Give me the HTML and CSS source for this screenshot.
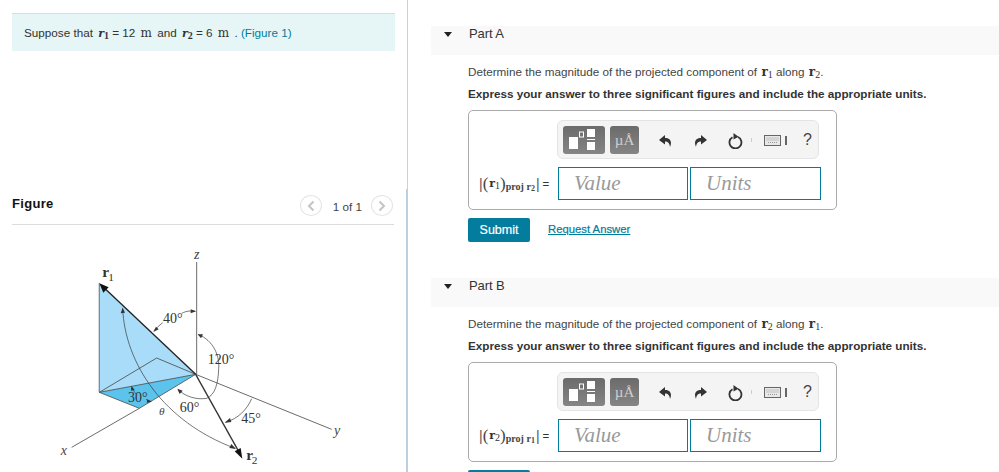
FILE: index.html
```html
<!DOCTYPE html>
<html lang="en">
<head>
<meta charset="utf-8">
<title>Projected component</title>
<link rel="stylesheet" href="styles.css">
</head>
<body>
<main class="page">
  <aside class="left">
    <section class="left-top">
      <div class="intro">Suppose that <span class="mi">r</span><span class="msub">1</span> = 12 <span class="unit">m</span> and <span class="mi">r</span><span class="msub">2</span> = 6 <span class="unit">m</span> . <a class="link">(Figure 1)</a></div>
    </section>
    <section class="left-bottom">
      <header class="fig-head">
        <h2 class="fig-title">Figure</h2>
        <nav class="pager">
          <span class="circle"><svg width="8" height="12" viewBox="0 0 8 12"><path d="M6.5 1.5 L2 6 L6.5 10.500" class="chev"/></svg></span>
          <span class="count">1 of 1</span>
          <span class="circle"><svg width="8" height="12" viewBox="0 0 8 12"><path d="M1.500 1.500 L6 6 L1.500 10.500" class="chev"/></svg></span>
        </nav>
      </header>
      <svg class="figure" width="320" height="232" viewBox="0 0 960 696">
        <polygon points="148,130 437,403 148,457" fill="#a8dcf8"/>
        <polygon points="148,457 437,403 268,505" fill="#5cc4ec"/>
        <g fill="none" stroke="#4d4d4d" stroke-width="2.500">
          <path d="M440 66 V403"/>
          <path d="M65 622 L268 505"/>
          <path d="M437 403 L845 568"/>
          <path d="M148 130 V457" stroke="#7d8b92" stroke-width="4"/>
          <path d="M148 457 L320 354 L437 403"/>
          <path d="M148 457 L437 403"/>
          <path d="M148 457 L268 505 L437 403"/>
        </g>
        <g fill="none" stroke="#333" stroke-width="2">
          <path d="M218 205 C225 370 340 545 555 625"/>
          <path d="M312 272 Q325 258 338 248"/>
          <path d="M395 220 C410 212 425 212 436 214"/>
          <path d="M445 284 C490 300 510 350 506 385 C505 430 495 465 470 475 C440 480 405 470 384 448"/>
          <path d="M605 476 C590 510 565 535 527 547"/>
          <path d="M246 441 C250 452 255 458 258 462"/>
          <path d="M288 478 C295 482 300 484 304 484"/>
        </g>
        <g fill="#333">
          <polygon points="218,203 212,220 225,218"/>
          <polygon points="558,627 538,624 544,612"/>
          <polygon points="310,276 318,260 326,268"/>
          <polygon points="438,214 422,208 422,220"/>
          <polygon points="443,283 459,283 453,295"/>
          <polygon points="382,446 398,452 389,462"/>
          <polygon points="524,548 540,534 544,546"/>
          <polygon points="244,438 254,450 243,452"/>
          <polygon points="305,485 292,478 290,488"/>
        </g>
        <path d="M437 403 L163 144" stroke="#222" stroke-width="4" fill="none"/>
        <polygon points="148,130 176,142 160,158" fill="#111"/>
        <path d="M437 403 L568 638" stroke="#333" stroke-width="4" fill="none"/>
        <polygon points="577,656 554,634 572,624" fill="#111"/>
        <g class="fig-num">
          <text x="339" y="249">40°</text>
          <text x="473" y="371">120°</text>
          <text x="234" y="486">30°</text>
          <text x="389" y="517">60°</text>
          <text x="574" y="548">45°</text>
        </g>
        <g class="fig-var">
          <text x="432" y="58">z</text>
          <text x="32" y="646">x</text>
          <text x="852" y="586">y</text>
          <text x="327" y="525" class="fig-small">θ</text>
        </g>
        <g class="fig-vec">
          <text x="157" y="112">r</text>
          <text x="175" y="124" class="fig-vecsub">1</text>
          <text x="589" y="660">r</text>
          <text x="605" y="672" class="fig-vecsub">2</text>
        </g>
      </svg>
    </section>
  </aside>

  <div class="right">
    <section class="part">
      <header class="part-head"><span class="caret"></span><h3 class="part-title">Part A</h3></header>
      <div class="part-body">
        <p class="q">Determine the magnitude of the projected component of <span class="bm">r</span><span class="bmsub">1</span> along <span class="bm">r</span><span class="bmsub">2</span>.</p>
        <p class="q strong">Express your answer to three significant figures and include the appropriate units.</p>
        <div class="answer">
          <div class="toolbar">
            <span class="tbtn tbtn-wide">
              <svg width="42" height="28" viewBox="0 0 42 28"><g fill="#fff"><rect x="6" y="11" width="9" height="12"/><rect x="24" y="3" width="8" height="8"/><rect x="24" y="13" width="8" height="1"/><rect x="24" y="16" width="8" height="8"/></g><rect x="16.500" y="6" width="4" height="5" fill="none" stroke="#fff"/></svg>
            </span>
            <span class="tbtn tbtn-unit">µÅ</span>
            <svg class="ic ic-undo" width="13" height="14" viewBox="0 0 13 14"><path d="M6 1 L0 6 L6 10.500 V7.500 C9 7.500 10.500 9 11 13 C13.500 7.500 11 4 6 4 Z" fill="#333"/></svg>
            <svg class="ic ic-redo" width="13" height="14" viewBox="0 0 13 14"><path d="M7 1 L13 6 L7 10.500 V7.500 C4 7.500 2.500 9 2 13 C-.5 7.500 2 4 7 4 Z" fill="#333"/></svg>
            <svg class="ic ic-reset" width="15" height="16" viewBox="0 0 15 16"><path d="M4.500 4.200 A6 6 0 1 0 10 4" fill="none" stroke="#333" stroke-width="1.800"/><path d="M5.500 0 L10.500 3.800 L5.500 6.500 Z" fill="#333"/></svg>
            <span class="tick"></span>
            <svg class="ic ic-kbd" width="24" height="11" viewBox="0 0 24 11"><rect x=".5" y=".5" width="16" height="10" fill="#e8e8e8" stroke="#666"/><path d="M2.500 3 H15 M2.500 5 H15 M4 7.500 H13" stroke="#999" stroke-dasharray="1 1"/><path d="M22 1 V10" stroke="#666" stroke-width="2"/></svg>
            <span class="help">?</span>
          </div>
          <div class="fields">
            <span class="label"><span class="bar">|</span><span class="paren">(</span><span class="bm">r</span><span class="bmsub">1</span><span class="paren">)</span><span class="proj">proj <b>r</b><span class="projsub">2</span></span><span class="bar">|</span><span class="eq">=</span></span>
            <span class="input input-value">Value</span>
            <span class="input input-units">Units</span>
          </div>
        </div>
        <div class="actions"><button class="submit">Submit</button><a class="request">Request Answer</a></div>
      </div>
    </section>
    <section class="part part-b">
      <header class="part-head"><span class="caret"></span><h3 class="part-title">Part B</h3></header>
      <div class="part-body">
        <p class="q">Determine the magnitude of the projected component of <span class="bm">r</span><span class="bmsub">2</span> along <span class="bm">r</span><span class="bmsub">1</span>.</p>
        <p class="q strong">Express your answer to three significant figures and include the appropriate units.</p>
        <div class="answer">
          <div class="toolbar">
            <span class="tbtn tbtn-wide">
              <svg width="42" height="28" viewBox="0 0 42 28"><g fill="#fff"><rect x="6" y="11" width="9" height="12"/><rect x="24" y="3" width="8" height="8"/><rect x="24" y="13" width="8" height="1"/><rect x="24" y="16" width="8" height="8"/></g><rect x="16.500" y="6" width="4" height="5" fill="none" stroke="#fff"/></svg>
            </span>
            <span class="tbtn tbtn-unit">µÅ</span>
            <svg class="ic ic-undo" width="13" height="14" viewBox="0 0 13 14"><path d="M6 1 L0 6 L6 10.500 V7.500 C9 7.500 10.500 9 11 13 C13.500 7.500 11 4 6 4 Z" fill="#333"/></svg>
            <svg class="ic ic-redo" width="13" height="14" viewBox="0 0 13 14"><path d="M7 1 L13 6 L7 10.500 V7.500 C4 7.500 2.500 9 2 13 C-.5 7.500 2 4 7 4 Z" fill="#333"/></svg>
            <svg class="ic ic-reset" width="15" height="16" viewBox="0 0 15 16"><path d="M4.500 4.200 A6 6 0 1 0 10 4" fill="none" stroke="#333" stroke-width="1.800"/><path d="M5.500 0 L10.500 3.800 L5.500 6.500 Z" fill="#333"/></svg>
            <span class="tick"></span>
            <svg class="ic ic-kbd" width="24" height="11" viewBox="0 0 24 11"><rect x=".5" y=".5" width="16" height="10" fill="#e8e8e8" stroke="#666"/><path d="M2.500 3 H15 M2.500 5 H15 M4 7.500 H13" stroke="#999" stroke-dasharray="1 1"/><path d="M22 1 V10" stroke="#666" stroke-width="2"/></svg>
            <span class="help">?</span>
          </div>
          <div class="fields">
            <span class="label"><span class="bar">|</span><span class="paren">(</span><span class="bm">r</span><span class="bmsub">2</span><span class="paren">)</span><span class="proj">proj <b>r</b><span class="projsub">1</span></span><span class="bar">|</span><span class="eq">=</span></span>
            <span class="input input-value">Value</span>
            <span class="input input-units">Units</span>
          </div>
        </div>
        <div class="actions"><button class="submit">Submit</button><a class="request">Request Answer</a></div>
      </div>
    </section>
  </div>
</main>
</body>
</html>
```

FILE: styles.css
```css
* { box-sizing: border-box; }
html, body { margin: 0; height: 472px; overflow: hidden; background: #fff; }
body { font-family: "Liberation Sans", Arial, sans-serif; font-size: 11.700px; color: #333; }
.page { display: flex; height: 472px; overflow: hidden; }

.left { width: 408px; flex: none; display: flex; flex-direction: column; }
.left-top { height: 189px; padding: 13px 12px 0; border-right: 1px solid #c3d3e0; }
.left-bottom { flex: 1; padding: 0 12px; border-right: 2px solid #bccfe0; }
.intro { height: 38px; border-top: 1px solid #dcdcdc; background: #e6f6f7; padding: 11px 12px 0; line-height: 16px; white-space: nowrap; }
.mi { font-family: "DejaVu Serif", serif; font-style: italic; font-weight: bold; font-size: 11px; margin-left: 2px; }
.msub { font-family: "Liberation Serif", serif; font-weight: bold; font-size: 10px; position: relative; top: 2px; }
.unit { font-family: "DejaVu Serif", serif; font-size: 12px; margin: 0 2px; }
.link { color: #007c9c; }

.fig-head { height: 36px; border-bottom: 1px solid #dcdcdc; display: flex; justify-content: space-between; align-items: center; padding-bottom: 6px; }
.fig-title { margin: 0; font-size: 13px; font-weight: bold; color: #111; letter-spacing: .3px; }
.pager { display: flex; align-items: center; margin-top: 4px; margin-right: 1px; }
.circle { width: 22px; height: 21px; border: 1px solid #e4e4e4; border-radius: 50%; display: flex; align-items: center; justify-content: center; }
.chev { fill: none; stroke: #c4c4c4; stroke-width: 2; }
.count { margin: 2px 9px 0 11px; color: #444; font-size: 11.700px; }

.figure { display: block; margin: 15px 0 0 38px; }
.fig-num text { font-family: "Liberation Serif", serif; font-size: 42px; fill: #333; }
.fig-var text { font-family: "Liberation Serif", serif; font-style: italic; font-size: 42px; fill: #444; }
.fig-var .fig-small { font-size: 34px; }
.fig-vec text { font-family: "Liberation Serif", serif; font-weight: bold; font-size: 46px; fill: #333; }
.fig-vec .fig-vecsub { font-weight: normal; font-size: 34px; }

.right { flex: 1; padding: 26px 0 0 23px; }
.part-b { margin-top: 36px; }
.part-head { height: 29px; background: #f9f9f9; display: flex; align-items: flex-start; padding: 0 0 0 13px; }
.caret { width: 0; height: 0; margin-top: 6px; border-left: 4px solid transparent; border-right: 4px solid transparent; border-top: 5px solid #222; }
.part-title { margin: 0 0 0 17px; font-size: 13px; letter-spacing: -.1px; line-height: 15px; font-weight: normal; color: #333; }
.part-body { padding: 0 0 0 37px; }
.q { margin: 9px 0 0; line-height: 15px; height: 15px; color: #444; white-space: nowrap; }
.q.strong { margin-top: 7px; font-weight: bold; color: #333; }
.bm { font-family: "DejaVu Serif", serif; font-weight: bold; font-size: 12px; margin-left: 1px; color: #333; }
.bmsub { font-family: "Liberation Serif", serif; font-size: 10px; position: relative; top: 2px; color: #333; }

.answer { margin-top: 9px; width: 369px; height: 100px; border: 1px solid #aaa; border-radius: 5px; padding: 9px 0 0 88px; }
.toolbar { width: 262px; height: 39px; background: #f4f4f4; border: 1px solid #e4e4e4; border-radius: 6px; display: flex; align-items: center; padding-left: 5px; }
.tbtn { height: 28px; border-radius: 3px; background: linear-gradient(#6b6b6b, #858585); display: flex; align-items: center; justify-content: center; flex: none; }
.tbtn-wide { width: 42px; }
.tbtn-unit { width: 29px; margin-left: 5px; padding-top: 1px; font-family: "Liberation Serif", serif; font-size: 15px; color: #cfcfcf; }
.ic { flex: none; display: block; margin-top: 2px; }
.ic-undo { margin-left: 20px; }
.ic-redo { margin-left: 22px; }
.ic-reset { margin-left: 21px; }
.tick { width: 1px; height: 4px; background: #ccc; margin-left: 8px; flex: none; }
.ic-kbd { margin-left: 12px; }
.help { margin-left: 15px; font-size: 16px; color: #444; }

.fields { display: flex; align-items: stretch; margin: 8px 0 0 -78px; height: 33px; }
.label { width: 78px; display: flex; align-items: center; font-size: 11px; white-space: nowrap; margin-right: 1px; padding-left: 0; }
.bar { color: #555; font-size: 14px; font-weight: 300; }
.paren { font-family: "Liberation Serif", serif; font-size: 17px; color: #444; }
.label .bm { font-size: 11px; margin-left: 1px; }
.proj { font-family: "Liberation Serif", serif; font-weight: bold; font-size: 10px; position: relative; top: 3px; color: #444; margin-right: 1px; white-space: pre; }
.projsub { font-size: 8px; position: relative; top: 1px; }
.eq { margin-left: 3px; font-size: 11.500px; }
.input { border: 1px solid #007c9c; font-family: "Liberation Serif", serif; font-style: italic; font-size: 21px; color: #999; display: flex; align-items: center; padding-left: 15px; }
.input-value { width: 130px; margin-right: 2px; }
.input-units { width: 131px; }

.actions { display: flex; align-items: center; margin-top: 8px; }
.submit { width: 62px; height: 24px; border: 0; padding: 0; border-radius: 2px; background: #037c9e; color: #fff; font-family: "Liberation Sans", Arial, sans-serif; font-size: 12.500px; -webkit-text-stroke: .2px #fff; }
.request { margin-left: 18px; color: #007c9c; font-size: 11.300px; text-decoration: underline; -webkit-text-stroke: .2px #007c9c; position: relative; top: -1px; }
```
